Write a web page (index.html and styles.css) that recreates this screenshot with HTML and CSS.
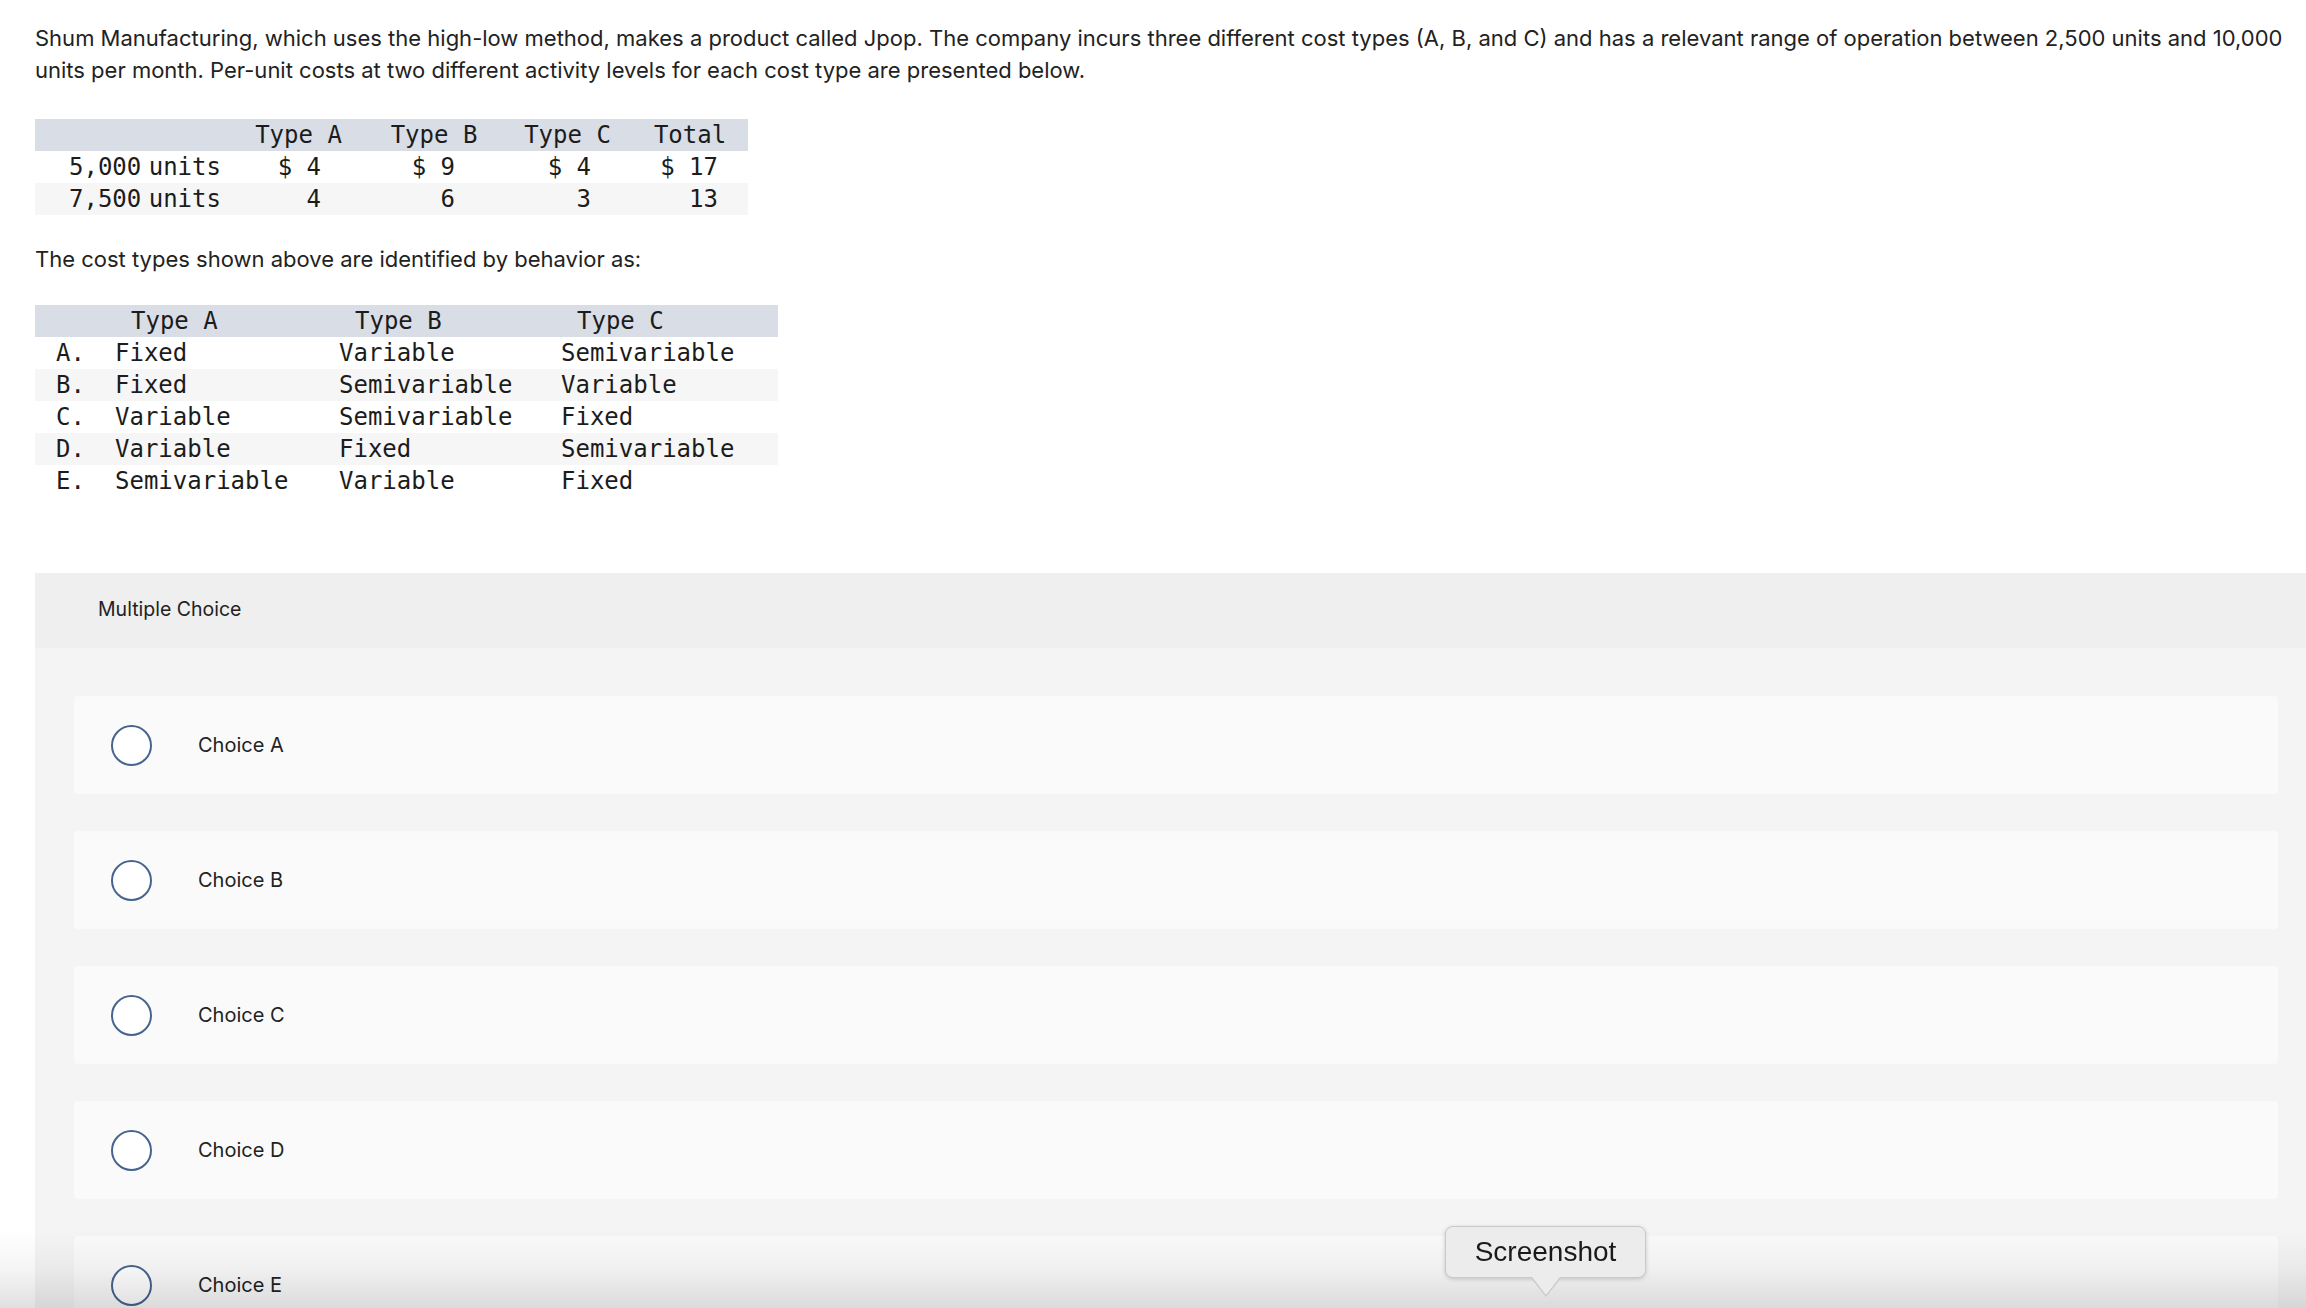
FILE: index.html
```html
<!DOCTYPE html>
<html lang="en">
<head>
<meta charset="utf-8">
<title>Multiple Choice</title>
<link rel="stylesheet" href="styles.css">
</head>
<body>
<div class="page">
  <p class="prompt">Shum Manufacturing, which uses the high-low method, makes a product called Jpop. The company incurs three different cost types (A, B, and C) and has a relevant range of operation between 2,500 units and 10,000 units per month. Per-unit costs at two different activity levels for each cost type are presented below.</p>

  <table class="costs">
    <colgroup>
      <col class="c-label"><col class="c-a"><col class="c-b"><col class="c-c"><col class="c-t">
    </colgroup>
    <tr class="head">
      <th></th><th>Type A</th><th>Type B</th><th>Type C</th><th>Total</th>
    </tr>
    <tr>
      <td class="label">5,000 units</td><td class="va">$ 4</td><td class="vb">$ 9</td><td class="vc">$ 4</td><td class="vt">$ 17</td>
    </tr>
    <tr class="alt">
      <td class="label">7,500 units</td><td class="va">4</td><td class="vb">6</td><td class="vc">3</td><td class="vt">13</td>
    </tr>
  </table>

  <p class="lead">The cost types shown above are identified by behavior as:</p>

  <table class="behavior">
    <colgroup>
      <col class="b-letter"><col class="b-a"><col class="b-b"><col class="b-c">
    </colgroup>
    <tr class="head">
      <th></th><th>Type A</th><th>Type B</th><th>Type C</th>
    </tr>
    <tr><td class="letter">A.</td><td>Fixed</td><td>Variable</td><td>Semivariable</td></tr>
    <tr class="alt"><td class="letter">B.</td><td>Fixed</td><td>Semivariable</td><td>Variable</td></tr>
    <tr><td class="letter">C.</td><td>Variable</td><td>Semivariable</td><td>Fixed</td></tr>
    <tr class="alt"><td class="letter">D.</td><td>Variable</td><td>Fixed</td><td>Semivariable</td></tr>
    <tr><td class="letter">E.</td><td>Semivariable</td><td>Variable</td><td>Fixed</td></tr>
  </table>

  <section class="mc">
    <div class="mc-head">Multiple Choice</div>
    <div class="mc-body">
      <label class="choice"><span class="radio"></span><span class="choice-text">Choice A</span></label>
      <label class="choice"><span class="radio"></span><span class="choice-text">Choice B</span></label>
      <label class="choice"><span class="radio"></span><span class="choice-text">Choice C</span></label>
      <label class="choice"><span class="radio"></span><span class="choice-text">Choice D</span></label>
      <label class="choice"><span class="radio"></span><span class="choice-text">Choice E</span></label>
    </div>
  </section>
</div>

<div class="tooltip">Screenshot</div>
<div class="bottom-fade"></div>
</body>
</html>
```

FILE: styles.css
```css
html, body {
  margin: 0;
  padding: 0;
  background: #ffffff;
  overflow: hidden;
}

body {
  font-family: "Inter", "Open Sans", sans-serif;
  color: #222222;
}

.page {
  padding-left: 35px;
}

.prompt {
  margin: 22px 0 0 0;
  width: 2268px;
  font-size: 22px;
  line-height: 32px;
}

.lead {
  margin: 28px 0 0 0;
  font-size: 22px;
  line-height: 32px;
}

/* monospace tables */
.costs, .behavior {
  border-collapse: collapse;
  table-layout: fixed;
  font-family: "DejaVu Sans Mono", monospace;
  font-size: 24px;
  line-height: 32px;
  color: #1c1c1c;
}

.costs th, .costs td,
.behavior th, .behavior td {
  padding: 0;
  height: 32px;
  white-space: pre;
  font-weight: normal;
}

.head { background: #d9dde6; }
.alt { background: #f6f6f6; }

.costs { margin-top: 33px; width: 713px; }

.c-label { width: 197px; }
.c-a { width: 133px; }
.c-b { width: 138px; }
.c-c { width: 129px; }
.c-t { width: 116px; }

.costs th { text-align: center; }

.costs .label {
  padding-left: 34px;
  text-align: left;
  word-spacing: -7px;
}

.costs .va, .costs .vb, .costs .vc, .costs .vt { text-align: right; }
.costs .va { padding-right: 44px; }
.costs .vb { padding-right: 48px; }
.costs .vc { padding-right: 41px; }
.costs .vt { padding-right: 30px; }

.behavior { margin-top: 30px; width: 743px; }

.b-letter { width: 80px; }
.b-a { width: 224px; }
.b-b { width: 222px; }
.b-c { width: 217px; }

.behavior th { text-align: left; padding-left: 16px; }
.behavior td { text-align: left; }
.behavior .letter { padding-left: 21px; }

/* multiple choice */
.mc { margin-top: 76px; background: #f4f4f4; }

.mc-head {
  background: #efefef;
  height: 75px;
  box-sizing: border-box;
  padding: 24px 0 0 63px;
  font-size: 19.5px;
  line-height: 24px;
}

.mc-body {
  display: flex;
  flex-direction: column;
  gap: 37px;
  padding: 48px 28px 40px 39px;
}

.choice {
  display: flex;
  align-items: center;
  height: 98px;
  background: #fafafa;
  border-radius: 4px;
  padding-left: 37px;
}

.radio {
  width: 37px;
  height: 37px;
  border: 2px solid #46648f;
  border-radius: 50%;
  background: #ffffff;
  flex: none;
}

.choice-text {
  margin-left: 46px;
  font-size: 20px;
  line-height: 24px;
}

/* overlays */
.tooltip {
  position: fixed;
  left: 1445px;
  top: 1226px;
  width: 201px;
  height: 52px;
  box-sizing: border-box;
  background: #ececec;
  border: 1px solid #c9c9c9;
  border-radius: 8px;
  box-shadow: 0 1px 4px rgba(0, 0, 0, 0.18);
  font-family: "Liberation Sans", Arial, sans-serif;
  font-size: 28px;
  line-height: 50px;
  text-align: center;
  color: #1a1a1a;
  z-index: 3;
}

.tooltip::after {
  content: "";
  position: absolute;
  left: 86px;
  top: 50px;
  border-left: 14px solid transparent;
  border-right: 14px solid transparent;
  border-top: 18px solid #ececec;
}

.tooltip::before {
  content: "";
  position: absolute;
  left: 85px;
  top: 51px;
  border-left: 15px solid transparent;
  border-right: 15px solid transparent;
  border-top: 19px solid #c9c9c9;
}

.bottom-fade {
  position: fixed;
  left: 0;
  right: 0;
  bottom: 0;
  height: 78px;
  background: linear-gradient(to bottom, rgba(0, 0, 0, 0) 0%, rgba(0, 0, 0, 0.04) 50%, rgba(0, 0, 0, 0.12) 100%);
  pointer-events: none;
  z-index: 2;
}
```
